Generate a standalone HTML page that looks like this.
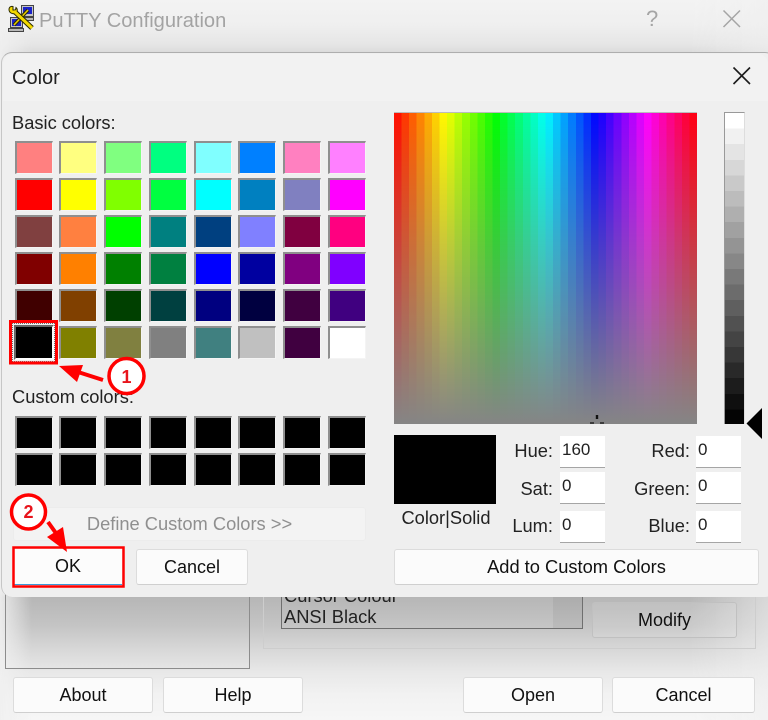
<!DOCTYPE html>
<html><head><meta charset="utf-8"><title>Color</title>
<style>
*{box-sizing:border-box}
html,body{margin:0;padding:0}
body{width:768px;height:720px;overflow:hidden;position:relative;font-family:"Liberation Sans",sans-serif;color:#1a1a1a;
background:
 linear-gradient(90deg,rgba(240,240,240,.9) 0,rgba(240,240,240,0) 32px,rgba(240,240,240,0) 690px,rgba(240,240,240,.6) 768px),
 linear-gradient(180deg,#f3f3f3 0,#efefef 25px,#e6e6e6 44px,#dcdcdc 52px,#dcdcdc 590px,#b6b6b6 597px,#c4c4c4 625px,#d8d8d8 650px,#e8e8e8 672px,#f2f2f2 695px,#f6f6f6 720px)}
.a{position:absolute}
.btn{position:absolute;background:#fbfbfb;border:1px solid #dcdcdc;border-bottom-color:#cfcfcf;border-radius:3px;display:flex;align-items:center;justify-content:center;font-size:18px;color:#111}
.t{position:absolute;font-size:18.3px;white-space:nowrap;line-height:20px;color:#222}
.r{text-align:right}
.grid{position:absolute;left:14.5px;display:grid;grid-template-columns:repeat(8,38px);column-gap:6.8px;row-gap:4px}
.grid div{width:38px;height:33px;border-style:solid;border-width:2px 1px 1px 2px;border-color:#8f8f8f #f4f4f4 #f4f4f4 #8f8f8f}
.in{position:absolute;width:45px;height:32px;background:#fff;border-bottom:1px solid #a5a5a5;font-size:17px;line-height:28px;padding-left:2px;color:#222}
</style></head>
<body>
<div>
 <div class="a" style="left:5px;top:560px;width:245px;height:109px;border:1px solid #8c8c8c"></div>
 <div class="a" style="left:263px;top:560px;width:493px;height:89px;border:1px solid #cdcdcd"></div>
 <div class="a" style="left:281px;top:560px;width:302px;height:69px;border:1px solid #6f6f6f;overflow:hidden">
   <div class="a" style="right:0;top:0;width:29px;height:68px;background:rgba(0,0,0,.05)"></div>
   <div class="t" style="left:2px;top:25px;font-size:18.3px;color:#222">Cursor Colour</div>
   <div class="t" style="left:2px;top:46px;font-size:18.3px;color:#222">ANSI Black</div>
 </div>
 <div class="btn" style="left:592px;top:602px;width:145px;height:36px;background:rgba(255,255,255,.1);border-color:#c0c0c0">Modify</div>
 <div class="btn" style="left:13px;top:677px;width:140px;height:36px">About</div>
 <div class="btn" style="left:163px;top:677px;width:140px;height:36px">Help</div>
 <div class="btn" style="left:463px;top:677px;width:140px;height:36px">Open</div>
 <div class="btn" style="left:612px;top:677px;width:143px;height:36px">Cancel</div>
 <svg class="a" style="left:0;top:0" width="40" height="36" viewBox="0 0 40 36">
  <rect x="21.500" y="5.500" width="12" height="11" fill="#c4c4c4" stroke="#444"/><rect x="23" y="7" width="9" height="7" fill="#1a22c8"/>
  <path d="M23.500 17.500h10v3h-10z" fill="#b8b8b8" stroke="#444"/>
  <rect x="10.500" y="17.500" width="12" height="10" fill="#c4c4c4" stroke="#444"/><rect x="12" y="19" width="9" height="7" fill="#1a22c8"/>
  <path d="M8.500 28.500h15v3h-15z" fill="#b8b8b8" stroke="#444"/>
  <path d="M28 10L14 25" stroke="#2a2a00" stroke-width="3.500"/>
  <path d="M28 10L14 25" stroke="#e8cc00" stroke-width="1.500"/>
  <path d="M14 11L32 28" stroke="#2a2a00" stroke-width="5"/>
  <path d="M9 9.500C9 7 11 6 13 6.500L13 10 15.500 10 16 7.500C18 9 17.500 12.500 15.500 13.500 12 14.500 9 12.500 9 9.500Z" fill="#f2d800" stroke="#2a2a00"/>
  <path d="M14 11L32 28" stroke="#f2d800" stroke-width="3"/>
 </svg>
 <div class="t" style="left:39px;top:9px;font-size:20.1px;line-height:24px;color:#a3a3a3">PuTTY Configuration</div>
 <div class="t" style="left:646px;top:7px;font-size:22px;line-height:24px;color:#a5a5a5">?</div>
 <svg class="a" style="left:722px;top:9px" width="20" height="20"><path d="M1.500 1.500L18 18M18 1.500L1.500 18" stroke="#a5a5a5" stroke-width="1.500"/></svg>
</div>

<div class="a" style="left:1px;top:52px;width:775px;height:545px;background:#efefef;border-radius:11px;border-top:1px solid #aeaeae;border-left:1px solid #c6c6c6"></div>
<div class="a" style="left:3px;top:54px;width:765px;height:47px;background:#f2f2f2;border-radius:10px 10px 0 0"></div>
<div class="t" style="left:12px;top:66px;font-size:20px;line-height:24px;color:#222">Color</div>
<svg class="a" style="left:732px;top:66px" width="20" height="20"><path d="M1.500 1.500L18 18M18 1.500L1.500 18" stroke="#1c1c1c" stroke-width="1.600"/></svg>

<div class="t" style="left:12px;top:113px">Basic colors:</div>
<div class="grid" style="top:141px">
<div style="background:#ff8080"></div><div style="background:#ffff80"></div><div style="background:#80ff80"></div><div style="background:#00ff80"></div><div style="background:#80ffff"></div><div style="background:#0080ff"></div><div style="background:#ff80c0"></div><div style="background:#ff80ff"></div>
<div style="background:#ff0000"></div><div style="background:#ffff00"></div><div style="background:#80ff00"></div><div style="background:#00ff40"></div><div style="background:#00ffff"></div><div style="background:#0080c0"></div><div style="background:#8080c0"></div><div style="background:#ff00ff"></div>
<div style="background:#804040"></div><div style="background:#ff8040"></div><div style="background:#00ff00"></div><div style="background:#008080"></div><div style="background:#004080"></div><div style="background:#8080ff"></div><div style="background:#800040"></div><div style="background:#ff0080"></div>
<div style="background:#800000"></div><div style="background:#ff8000"></div><div style="background:#008000"></div><div style="background:#008040"></div><div style="background:#0000ff"></div><div style="background:#0000a0"></div><div style="background:#800080"></div><div style="background:#8000ff"></div>
<div style="background:#400000"></div><div style="background:#804000"></div><div style="background:#004000"></div><div style="background:#004040"></div><div style="background:#000080"></div><div style="background:#000040"></div><div style="background:#400040"></div><div style="background:#400080"></div>
<div style="background:#000"></div><div style="background:#808000"></div><div style="background:#808040"></div><div style="background:#808080"></div><div style="background:#408080"></div><div style="background:#c0c0c0"></div><div style="background:#400040"></div><div style="background:#fff"></div>
</div>
<div class="a" style="left:12px;top:323px;width:43px;height:39px;border:1.500px dotted #6e6e6e;background:#efefef"></div>
<div class="a" style="left:14px;top:325px;width:40px;height:35px;background:#000;border-style:solid;border-width:2px;border-color:#666 #fff #fff #666"></div>

<div class="t" style="left:12px;top:387px">Custom colors:</div>
<div class="grid" style="top:416px">
<div style="background:#000"></div><div style="background:#000"></div><div style="background:#000"></div><div style="background:#000"></div><div style="background:#000"></div><div style="background:#000"></div><div style="background:#000"></div><div style="background:#000"></div>
<div style="background:#000"></div><div style="background:#000"></div><div style="background:#000"></div><div style="background:#000"></div><div style="background:#000"></div><div style="background:#000"></div><div style="background:#000"></div><div style="background:#000"></div>
</div>

<div class="btn" style="left:13px;top:507px;width:353px;height:34px;background:#f3f3f3;border:1px solid #ececec;color:#8f8f8f;font-size:18.300px">Define Custom Colors &gt;&gt;</div>
<div class="btn" style="left:14px;top:549px;width:108px;height:36px;background:#fcfcfc;border:0;border-bottom:1px solid #3d9ad8;border-radius:0;font-size:18px">OK</div>
<div class="btn" style="left:136px;top:549px;width:112px;height:36px;font-size:18px">Cancel</div>

<div class="a" style="left:394px;top:112px;width:303px;height:312px;border-top:1px solid #bbb;background:linear-gradient(180deg,rgba(128,128,128,0),#858585),linear-gradient(90deg,
hsl(4 100% 50%) 0 7.6px,hsl(13 100% 50%) 0 15.2px,hsl(22 100% 50%) 0 22.700px,hsl(31 100% 50%) 0 30.300px,hsl(40 100% 50%) 0 37.900px,hsl(49 100% 50%) 0 45.500px,hsl(58 100% 50%) 0 53px,hsl(67 100% 50%) 0 60.600px,hsl(76 100% 50%) 0 68.200px,hsl(85 100% 50%) 0 75.800px,
hsl(94 100% 50%) 0 83.300px,hsl(103 100% 50%) 0 90.900px,hsl(112 100% 50%) 0 98.500px,hsl(121 100% 50%) 0 106px,hsl(130 100% 50%) 0 113.600px,hsl(139 100% 50%) 0 121.200px,hsl(148 100% 50%) 0 128.800px,hsl(157 100% 50%) 0 136.300px,hsl(166 100% 50%) 0 143.900px,hsl(175 100% 50%) 0 151.500px,
hsl(184 100% 50%) 0 159.100px,hsl(193 100% 50%) 0 166.600px,hsl(202 100% 50%) 0 174.200px,hsl(211 100% 50%) 0 181.800px,hsl(220 100% 50%) 0 189.400px,hsl(229 100% 50%) 0 197px,hsl(238 100% 50%) 0 204.500px,hsl(247 100% 50%) 0 212.100px,hsl(256 100% 50%) 0 219.700px,hsl(265 100% 50%) 0 227.300px,
hsl(274 100% 50%) 0 234.800px,hsl(283 100% 50%) 0 242.400px,hsl(292 100% 50%) 0 250px,hsl(301 100% 50%) 0 257.600px,hsl(310 100% 50%) 0 265.100px,hsl(319 100% 50%) 0 272.700px,hsl(328 100% 50%) 0 280.300px,hsl(337 100% 50%) 0 287.900px,hsl(346 100% 50%) 0 295.400px,hsl(355 100% 50%) 0 303px)"></div>
<svg class="a" style="left:587px;top:413px" width="20" height="12"><path d="M10 2v4" stroke="#111" stroke-width="2.400"/><path d="M3 10h4M13 10h4" stroke="#111" stroke-width="1.300"/></svg>

<div class="a" style="left:724px;top:112px;width:21px;height:312px;border:1px solid #999;border-bottom:0;border-right:1px solid #ddd;background:linear-gradient(180deg,#fff 0 15.6px,#f1f1f1 0 31.2px,#e4e4e4 0 46.8px,#d7d7d7 0 62.4px,#c9c9c9 0 78px,#bcbcbc 0 93.6px,#afafaf 0 109.2px,#a1a1a1 0 124.8px,#949494 0 140.4px,#878787 0 156px,#797979 0 171.6px,#6c6c6c 0 187.2px,#5f5f5f 0 202.8px,#515151 0 218.4px,#444 0 234px,#373737 0 249.6px,#292929 0 265.2px,#1c1c1c 0 280.8px,#0f0f0f 0 296.4px,#040404 0 312px)"></div>
<svg class="a" style="left:745px;top:407px" width="18" height="33"><path d="M17 1V32L1.500 16.500Z" fill="#000"/></svg>

<div class="a" style="left:394px;top:435px;width:102px;height:69px;background:#000"></div>
<div class="t" style="left:394px;top:508px;width:104px;text-align:center">Color|Solid</div>

<div class="t r" style="left:489px;top:441px;width:64px">Hue:</div>
<div class="t r" style="left:489px;top:479px;width:64px">Sat:</div>
<div class="t r" style="left:489px;top:516px;width:64px">Lum:</div>
<div class="t r" style="left:620px;top:441px;width:70px">Red:</div>
<div class="t r" style="left:620px;top:479px;width:70px">Green:</div>
<div class="t r" style="left:620px;top:516px;width:70px">Blue:</div>
<div class="in" style="left:560px;top:436px">160</div>
<div class="in" style="left:560px;top:472px">0</div>
<div class="in" style="left:560px;top:511px">0</div>
<div class="in" style="left:696px;top:436px">0</div>
<div class="in" style="left:696px;top:472px">0</div>
<div class="in" style="left:696px;top:511px">0</div>

<div class="btn" style="left:394px;top:549px;width:365px;height:36px;font-size:18.300px">Add to Custom Colors</div>

<svg class="a" style="left:0;top:0" width="768" height="720">
 <rect x="10.500" y="321.500" width="46" height="41.500" fill="none" stroke="#f00" stroke-width="3"/>
 <rect x="13.500" y="547.500" width="110" height="39" fill="none" stroke="#f00" stroke-width="2.500"/>
 <path d="M103 380L78 372" stroke="#f00" stroke-width="4"/>
 <path d="M59 366L83 365L77 382Z" fill="#f00"/>
 <circle cx="126.500" cy="376" r="17.500" fill="#fff" stroke="#f00" stroke-width="3.500"/>
 <path d="M48 522L58 536" stroke="#f00" stroke-width="4"/>
 <path d="M67 552L47 537L63 527Z" fill="#f00"/>
 <circle cx="28.500" cy="512" r="17" fill="#fff" stroke="#f00" stroke-width="3.500"/>
 <text x="126.500" y="383" text-anchor="middle" font-family="Liberation Sans" font-weight="bold" font-size="18" fill="#e8141c">1</text>
 <text x="28.500" y="518" text-anchor="middle" font-family="Liberation Sans" font-weight="bold" font-size="18" fill="#e8141c">2</text>
</svg>
</body></html>
